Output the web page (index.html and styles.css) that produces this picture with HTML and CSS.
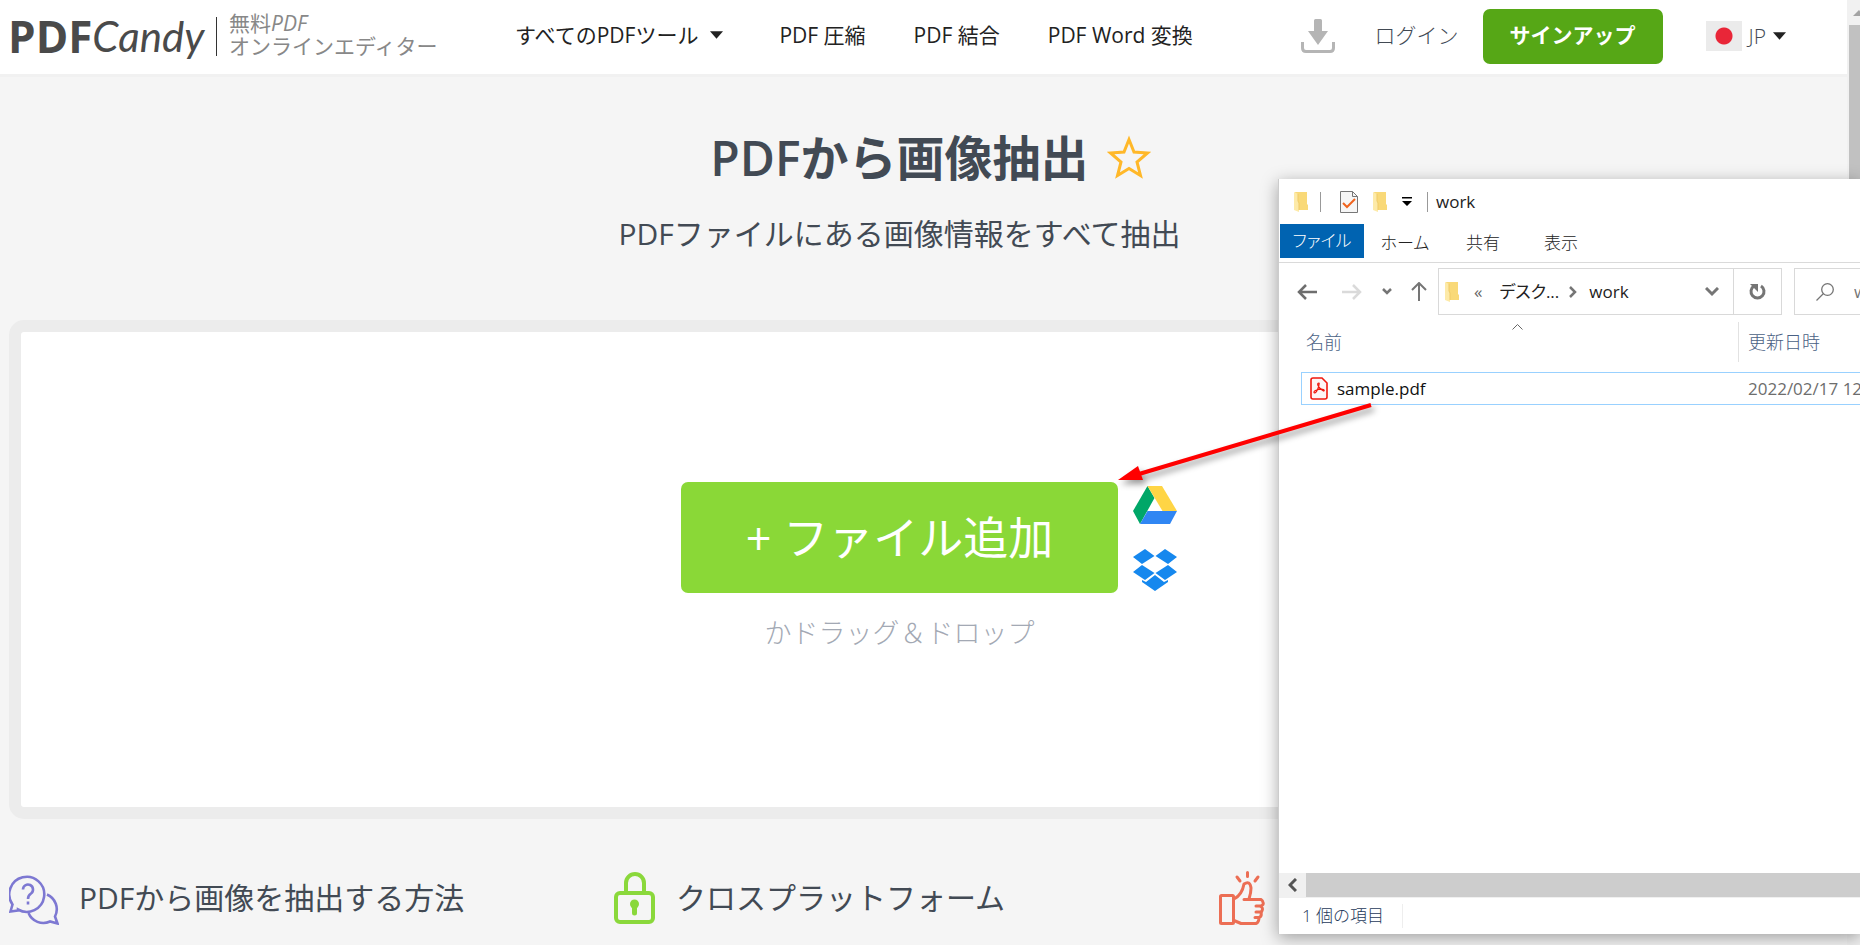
FILE: index.html
```html
<!DOCTYPE html>
<html lang="ja">
<head>
    <meta charset="UTF-8">
    <meta name="viewport" content="width=device-width, initial-scale=1.0">
    <title>PDFから画像抽出</title>
    <link rel="stylesheet" href="styles.css">
</head>
<body>

    <svg class="defs" aria-hidden="true">
        <symbol id="folder" viewBox="0 0 14 20">
            <path d="M1 0h12v12l1 1v5H4z" fill="#f9d978"/>
            <path d="M0 0l4 2v7l1 2v9l-5-2z" fill="#fdeaa8"/>
            <path d="M4 2v7l1 2v7" fill="none" stroke="#efcb68" stroke-width="1"/>
        </symbol>
        <symbol id="caret" viewBox="0 0 14 8">
            <path d="M0 0h14L7 8z" fill="currentColor"/>
        </symbol>
    </svg>

    <div class="page">
        <header class="header">
            <div class="brand">
                <a class="logo" href="/jp/"><span class="logo-pdf">PDF</span><span class="logo-candy">Candy</span></a>
                <p class="tagline">無料<em>PDF</em><br>オンラインエディター</p>
            </div>
            <nav class="nav">
                <a href="#tools">すべてのPDFツール <svg class="caret" width="13" height="8"><use href="#caret"/></svg></a>
                <a href="#compress">PDF 圧縮</a>
                <a href="#merge">PDF 結合</a>
                <a href="#word">PDF Word 変換</a>
            </nav>
            <div class="account">
                <a class="download" href="#download" aria-label="ダウンロード">
                    <svg width="34" height="34" viewBox="0 0 34 34">
                        <path d="M13 1.500q0-1.500 1.500-1.500h5q1.500 0 1.500 1.500V12h6L17 26 7 12h6z" fill="#b5b5b5"/>
                        <path d="M1.500 23v6q0 3.500 3.500 3.500h24q3.500 0 3.500-3.500v-6" fill="none" stroke="#b5b5b5" stroke-width="3"/>
                    </svg>
                </a>
                <a class="login" href="#login">ログイン</a>
                <button class="signup" type="button">サインアップ</button>
                <button class="lang" type="button"><span class="flag"></span>JP<svg width="13" height="8"><use href="#caret"/></svg></button>
            </div>
        </header>

        <main class="main">
            <h1 class="title">PDFから画像抽出
                <svg class="star" width="44" height="44" viewBox="0 0 44 44">
                    <path d="M22 4.500l5 12.500 13.500 1-10.500 9 3.500 13.500L22 33.500 10.500 40.500 14 27 3.500 18l13.500-1z" fill="none" stroke="#ffb829" stroke-width="3"/>
                </svg>
            </h1>
            <p class="subtitle">PDFファイルにある画像情報をすべて抽出</p>

            <section class="drop">
                <div class="drop-inner">
                    <button class="add-file" type="button">+ ファイル追加</button>
                    <div class="clouds">
                        <a href="#drive" aria-label="Google Drive">
                            <svg width="44" height="40" viewBox="0 0 44 40">
                                <path d="M14.500 1L0 26l7 13L21.500 13z" fill="#00a768"/>
                                <path d="M14.500 1h14.500L44 26H29.500z" fill="#ffd545"/>
                                <path d="M14.500 26H44l-7 13H7z" fill="#3086f3"/>
                            </svg>
                        </a>
                        <a href="#dropbox" aria-label="Dropbox">
                            <svg width="44" height="42" viewBox="0 0 44 42" fill="#1688ee">
                                <path d="M12 0l9.500 7L9 15 0 8zM32 0l12 8-9 7-12.500-8zM9 16l12.500 8L12 31 0 23zM35 16l9 7-12 8-9.500-7zM22 26l9 7 4-2v2L22 42 9 33v-2l4 2z"/>
                            </svg>
                        </a>
                    </div>
                </div>
                <p class="drop-hint">かドラッグ＆ドロップ</p>
            </section>

            <section class="features">
                <div class="feature">
                    <svg width="50" height="54" viewBox="0 -4 50 54" fill="none" stroke="#7d78d2" stroke-width="2.600">
                        <path d="M9 35.500L1.500 36.500l2-7A17.500 17.500 0 1 1 9 34.500z"/>
                        <path d="M38 19.500a16 16 0 0 1 8 22l2.500 7-7.500-2a16 16 0 0 1-21.500-8.500"/>
                        <path d="M14 14.500a5 5 0 1 1 8 4q-3 2-3 5.500"/>
                        <path d="M19 26.500v3"/>
                    </svg>
                    <h2>PDFから画像を抽出する方法</h2>
                </div>
                <div class="feature">
                    <svg width="42" height="52" viewBox="0 0 42 52" fill="none" stroke="#8ad83b" stroke-width="4">
                        <rect x="2" y="21" width="37" height="29" rx="4"/>
                        <path d="M12 20v-9a9 9 0 0 1 18 0v9"/>
                        <circle cx="20.500" cy="32" r="4.500" fill="#8ad83b" stroke="none"/>
                        <path d="M20.500 33v8" stroke-width="5" stroke-linecap="round"/>
                    </svg>
                    <h2>クロスプラットフォーム</h2>
                </div>
                <div class="feature">
                    <svg width="46" height="54" viewBox="0 0 46 54" fill="none" stroke="#ec6e54" stroke-width="3" stroke-linecap="round" stroke-linejoin="round">
                        <rect x="1.500" y="24.500" width="13" height="28" rx="1"/>
                        <path d="M15 28q8-4 10-15 6-4 7 4 0 5-2 11M25 28.500h17q3 2 2 5l-2 2q3 2 0 6 1 4-2 5 0 5-3 6H22l-7-3"/>
                        <path d="M37 35h5M37 41h5M36 46.500h4M18 6l3 4M28.500 1.500v4M39 6l-3 4"/>
                    </svg>
                </div>
            </section>
        </main>
    </div>

    <div class="scrollbar">
        <svg width="11" height="6" viewBox="0 0 11 6"><path d="M0 6L6 0l5 6z" fill="#a3a3a3"/></svg>
        <div class="scrollbar-thumb"></div>
    </div>

    <!-- file explorer window -->
    <div class="explorer">
        <div class="explorer-title">
            <svg class="app-icon" width="14" height="20"><use href="#folder"/></svg>
            <span class="sep"></span>
            <svg class="check-icon" width="18" height="22" viewBox="0 0 18 22">
                <path d="M.5.5h12l5 5v16H.5z" fill="#f6f6f6" stroke="#777"/>
                <path d="M12.500.5v5h5" fill="none" stroke="#777"/>
                <path d="M3 12l4 4 8-8" fill="none" stroke="#f0641e" stroke-width="2"/>
            </svg>
            <svg width="14" height="20"><use href="#folder"/></svg>
            <svg class="quick" width="10" height="9" viewBox="0 0 10 9"><path d="M0 0h10v1.500H0zM0 4h10L5 9z"/></svg>
            <span class="sep"></span>
            <span class="explorer-name">work</span>
        </div>

        <div class="tabs">
            <button class="tab active" type="button">ファイル</button>
            <button class="tab" type="button">ホーム</button>
            <button class="tab" type="button">共有</button>
            <button class="tab" type="button">表示</button>
        </div>

        <div class="toolbar">
            <div class="arrows">
                <button class="back" type="button" aria-label="戻る"><svg width="20" height="16" viewBox="0 0 20 16"><path d="M9 1L2 8l7 7M2 8h18" fill="none" stroke="#6e6e6e" stroke-width="2.500"/></svg></button>
                <button type="button" aria-label="進む"><svg width="20" height="16" viewBox="0 0 20 16"><path d="M11 1l7 7-7 7M18 8H0" fill="none" stroke="#dadada" stroke-width="2.500"/></svg></button>
                <button type="button" aria-label="履歴"><svg width="10" height="7" viewBox="0 0 10 7"><path d="M1 1l4 4 4-4" fill="none" stroke="#757575" stroke-width="2.500"/></svg></button>
                <button type="button" aria-label="上へ"><svg width="16" height="20" viewBox="0 0 16 20"><path d="M1 8l7-7 7 7M8 1v18" fill="none" stroke="#757575" stroke-width="2"/></svg></button>
            </div>
            <div class="address">
                <svg width="14" height="20"><use href="#folder"/></svg>
                <span class="crumb-more">«</span>
                <span class="crumb">デスク...</span>
                <svg class="crumb-arrow" width="8" height="12" viewBox="0 0 8 12"><path d="M1 1l5 5-5 5" fill="none" stroke="#757575" stroke-width="2.500"/></svg>
                <span>work</span>
                <svg class="address-arrow" width="14" height="10" viewBox="0 0 14 10"><path d="M1 1l6 6 6-6" fill="none" stroke="#757575" stroke-width="3"/></svg>
                <button class="refresh" type="button" aria-label="更新">
                    <svg width="18" height="18" viewBox="0 0 18 18"><path d="M12 3a6.500 6.500 0 1 1-7 0" fill="none" stroke="#757575" stroke-width="3"/><path d="M1 1h8v8z" fill="#757575"/></svg>
                </button>
            </div>
            <div class="search">
                <svg width="18" height="18" viewBox="0 0 18 18" fill="none" stroke="#757575" stroke-width="1.300"><circle cx="11.500" cy="6.500" r="5.800"/><path d="M7.500 10.500L.5 17.500"/></svg>
                <input type="text" placeholder="work" aria-label="検索">
            </div>
        </div>

        <div class="files">
            <table>
                <thead>
                    <tr>
                        <th class="col-name">名前<svg class="sort" width="11" height="7" viewBox="0 0 11 7"><path d="M.5 6.500l5-5 5 5" fill="none" stroke="#666"/></svg></th>
                        <th>更新日時</th>
                    </tr>
                </thead>
                <tbody>
                    <tr>
                        <td>
                            <div class="file">
                                <svg width="18" height="23" viewBox="0 0 18 23" fill="none" stroke="#f0190f">
                                    <path d="M3 1h9l5 5v14q0 2-2 2H3q-2 0-2-2V3q0-2 2-2z" fill="#fdf5f5" stroke-width="1.600"/>
                                    <path d="M9 6q-2 0-1 2.500T13.500 14q1.500-.5 0-1.500-3-1-8 1-2.500 1.500-1 2.500 2 0 4-6 1-4 .5-4z" stroke-width="1.200"/>
                                </svg>
                                sample.pdf
                            </div>
                        </td>
                        <td class="date">2022/02/17 12</td>
                    </tr>
                </tbody>
            </table>
        </div>

        <div class="hscroll">
            <button type="button" aria-label="左へ"><svg width="9" height="14" viewBox="0 0 9 14"><path d="M8 1L2 7l6 6" fill="none" stroke="#555" stroke-width="3"/></svg></button>
            <div class="hscroll-thumb"></div>
        </div>
        <div class="status"><span>1 個の項目</span></div>
    </div>

    <!-- drag arrow -->
    <svg class="drag-arrow" width="260" height="90" viewBox="0 0 260 90" aria-hidden="true">
        <path d="M254 5L22 74" stroke="#f00" stroke-width="4"/>
        <path d="M1 80l20-14 5 14z" fill="#f00"/>
    </svg>

</body>
</html>
```

FILE: styles.css
```css
* {
    margin: 0;
    padding: 0;
    box-sizing: border-box;
}

body {
    display: flex;
    position: relative;
    height: 100vh;
    overflow: hidden;
    font-family: "Open Sans", "Noto Sans CJK JP", sans-serif;
    font-weight: 400;
    background-color: #f5f5f5;
    color: #424a54;
}

a {
    color: inherit;
    text-decoration: none;
}

button {
    border: none;
    background: none;
    font: inherit;
    color: inherit;
    cursor: pointer;
}

svg {
    display: block;
    flex-shrink: 0;
}

.defs {
    position: absolute;
    width: 0;
    height: 0;
}

.page {
    flex: 1;
    min-width: 0;
}

/* header */
.header {
    display: flex;
    align-items: center;
    height: 77px;
    padding: 0 61px 2px 8px;
    background-color: #fff;
    border-bottom: 3px solid #f1f1f1;
    font-size: 21px;
    line-height: 28px;
    white-space: nowrap;
}

.brand {
    display: flex;
    align-items: center;
    width: 507px;
}

.logo {
    display: flex;
    align-items: center;
    width: 209px;
    height: 39px;
    color: #4a4a4a;
    border-right: 1px solid #333;
}

.logo-pdf {
    font-size: 44px;
    font-weight: 700;
    line-height: 40px;
}

.logo-candy {
    font-family: Lato, sans-serif;
    font-size: 42px;
    font-style: italic;
    font-weight: 400;
    line-height: 40px;
}

.tagline {
    padding: 0 0 2px 12px;
    line-height: 23px;
    color: #888;
}

.nav {
    display: flex;
    gap: 48px;
    padding-bottom: 2px;
    color: #222;
}

.nav a {
    display: flex;
    align-items: center;
}

.nav .caret {
    margin: 0 8px 0 12px;
}

.account {
    display: flex;
    align-items: center;
    margin-left: auto;
    font-weight: 300;
}

.login {
    margin: 0 24px 0 40px;
    padding-bottom: 2px;
}

.signup {
    width: 180px;
    height: 55px;
    padding-bottom: 3px;
    border-radius: 7px;
    background-color: #56a716;
    color: #fff;
    font-weight: 700;
}

.lang {
    display: flex;
    align-items: center;
    gap: 7px;
    margin-left: 43px;
}

.lang svg {
    color: #222;
}

.flag {
    width: 36px;
    height: 30px;
    background: radial-gradient(circle, #e92638 8px, #ebebeb 9px);
}

/* main */
.main {
    padding: 51px 57px 0 9px;
}

.title {
    position: relative;
    width: max-content;
    margin: 0 auto;
    font-size: 48px;
    line-height: 60px;
    font-weight: 600;
}

.star {
    position: absolute;
    left: 100%;
    top: 7px;
    margin-left: 18px;
}

.subtitle {
    margin-top: 26px;
    font-size: 30px;
    line-height: 40px;
    text-align: center;
}

.drop {
    margin-top: 66px;
    padding: 150px 0 154px;
    border: 12px solid #ececec;
    border-radius: 15px;
    background-color: #fff;
    text-align: center;
}

.drop-inner {
    display: flex;
    justify-content: center;
    position: relative;
    width: max-content;
    margin: 0 auto;
}

.add-file {
    width: 437px;
    height: 111px;
    padding-bottom: 4px;
    border-radius: 7px;
    background-color: #8ad837;
    color: #fff;
    font-size: 45px;
}

.clouds {
    display: flex;
    flex-direction: column;
    gap: 24px;
    position: absolute;
    left: 100%;
    top: 3px;
    margin-left: 15px;
}

.drop-hint {
    margin-top: 20px;
    font-size: 27px;
    line-height: 40px;
    font-weight: 300;
    color: #a3a9b4;
}

.features {
    display: grid;
    grid-template-columns: repeat(3, 1fr);
    gap: 34px;
    margin-top: 52px;
}

.feature {
    display: flex;
    align-items: center;
    gap: 20px;
    height: 54px;
}

.feature h2 {
    font-size: 30px;
    line-height: 40px;
    font-weight: 400;
}

/* page scrollbar */
.scrollbar {
    display: flex;
    flex-direction: column;
    align-items: flex-end;
    width: 13px;
    padding-top: 10px;
    background-color: #f1f1f1;
    overflow: hidden;
}

.scrollbar svg {
    margin: 0 -4px 9px 0;
}

.scrollbar-thumb {
    width: 11px;
    height: 700px;
    background-color: #c1c1c1;
}

/* explorer */
.explorer {
    display: flex;
    flex-direction: column;
    position: absolute;
    left: 1278px;
    right: 0;
    top: 179px;
    height: 755px;
    overflow: hidden;
    border-left: 1px solid #ccc;
    background-color: #fff;
    box-shadow: 0 4px 16px rgba(0, 0, 0, 0.35);
    color: #222;
    font-size: 17px;
    line-height: 24px;
    white-space: nowrap;
}

.explorer-title {
    display: flex;
    align-items: center;
    height: 45px;
    padding-left: 15px;
}

.sep {
    width: 1px;
    height: 20px;
    margin-left: 12px;
    background-color: #999;
}

.check-icon {
    margin: 0 15px 0 19px;
}

.quick {
    margin: 0 3px 0 15px;
}

.explorer-name {
    margin-left: 8px;
}

.tabs {
    display: flex;
    height: 39px;
    padding-left: 1px;
    border-bottom: 1px solid #dadada;
}

.tab {
    width: 78px;
    height: 38px;
    font-weight: 300;
    font-feature-settings: "palt";
}

.tab.active {
    width: 84px;
    height: 34px;
    margin-right: 2px;
    background-color: #0063b1;
    color: #fff;
}

.toolbar {
    display: flex;
    gap: 12px;
    padding: 5px 0 0 18px;
}

.arrows {
    display: flex;
    align-items: center;
    justify-content: space-between;
    flex: none;
    width: 130px;
}

.arrows .back {
    margin-right: 6px;
}

.address {
    display: flex;
    align-items: center;
    flex: none;
    width: 344px;
    height: 47px;
    margin-left: -1px;
    padding-left: 6px;
    border: 1px solid #d9d9d9;
}

.crumb-more {
    margin: 0 17px 0 15px;
    color: #666;
}

.crumb {
    font-feature-settings: "palt";
}

.crumb-arrow {
    margin: 0 12px 0 10px;
}

.address-arrow {
    margin-left: auto;
}

.refresh {
    display: flex;
    align-items: center;
    justify-content: center;
    width: 48px;
    height: 45px;
    margin-left: 14px;
    border-left: 1px solid #d9d9d9;
}

.search {
    display: flex;
    align-items: center;
    gap: 20px;
    flex: none;
    width: 240px;
    padding-left: 21px;
    border: 1px solid #d9d9d9;
}

.search input {
    width: 160px;
    border: none;
    outline: none;
    font: inherit;
}

.search input::placeholder {
    color: #757575;
}

.files {
    flex: 1;
    padding: 7px 0 0 22px;
}

table {
    width: 760px;
    table-layout: fixed;
    border-collapse: separate;
    border-spacing: 0;
}

th {
    position: relative;
    height: 40px;
    padding-left: 9px;
    color: #4a6184;
    font-size: 18px;
    font-weight: 300;
    text-align: left;
}

.col-name {
    width: 438px;
    padding-left: 5px;
    border-right: 1px solid #e2e2e2;
}

.sort {
    position: absolute;
    left: 211px;
    top: 1px;
}

tbody::before {
    content: "";
    display: block;
    height: 10px;
}

td {
    height: 33px;
    border: 1px solid #99d1ff;
    border-width: 1px 0;
}

td:first-child {
    border-left-width: 1px;
}

.file {
    display: flex;
    align-items: center;
    gap: 9px;
    padding-left: 8px;
    color: #111;
}

.date {
    padding-left: 9px;
    color: #6d6d6d;
}

.hscroll {
    display: flex;
    height: 25px;
    border-bottom: 1px solid #f0f0f0;
}

.hscroll button {
    display: flex;
    align-items: center;
    justify-content: center;
    width: 27px;
    background-color: #f0f0f0;
}

.hscroll-thumb {
    flex: 1;
    background-color: #cdcdcd;
}

.status {
    display: flex;
    align-items: center;
    height: 36px;
    padding-left: 23px;
    color: #1e395b;
    font-weight: 300;
}

.status span {
    padding-right: 18px;
    border-right: 1px solid #eee;
}

.drag-arrow {
    position: absolute;
    left: 1117px;
    top: 400px;
    filter: drop-shadow(3px 4px 3px rgba(0, 0, 0, 0.4));
}
```
